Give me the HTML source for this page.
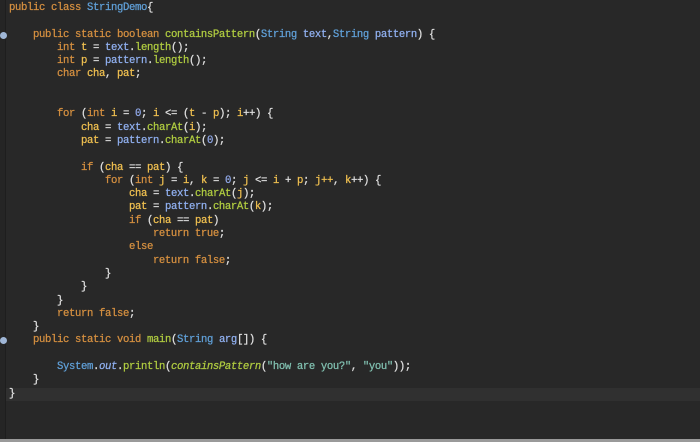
<!DOCTYPE html>
<html><head><style>
body{margin:0;width:700px;height:442px;background:#282828;overflow:hidden;position:relative}
.gut{position:absolute;left:0;top:0;width:5px;height:440px;background:#252525;border-right:1px solid #1e1e1e}
.hl{position:absolute;left:6px;top:388px;width:694px;height:13px;background:#303030}
.bot{position:absolute;left:0;top:439px;width:700px;height:3px;background:#9a9a9a}
.m{position:absolute;left:0;width:7px;height:7px;border-radius:50%;background:#9fb6d6}
pre{position:absolute;left:9px;top:2px;margin:0;font-family:"Liberation Mono",monospace;font-size:10.6px;letter-spacing:-0.36px;line-height:13.3px;color:#e0e0e0;-webkit-text-stroke:0.25px currentColor}
.k{color:#d69040}.v{color:#f0c050}.f{color:#b0cc40}.t{color:#60a0d8}.p{color:#90b0f0}.n{color:#90a8e8}.s{color:#80c0b0}.i{color:#b0cc40;font-style:italic}
</style></head><body>
<div class="gut"></div><div class="hl"></div><div class="bot"></div>
<div class="m" style="top:32px"></div><div class="m" style="top:337px"></div>
<pre><span class="k">public class</span> <span class="t">StringDemo</span>{

    <span class="k">public static boolean</span> <span class="f">containsPattern</span>(<span class="t">String</span> <span class="p">text</span>,<span class="t">String</span> <span class="p">pattern</span>) {
        <span class="k">int</span> <span class="v">t</span> = <span class="p">text</span>.<span class="f">length</span>();
        <span class="k">int</span> <span class="v">p</span> = <span class="p">pattern</span>.<span class="f">length</span>();
        <span class="k">char</span> <span class="v">cha</span>, <span class="v">pat</span>;


        <span class="k">for</span> (<span class="k">int</span> <span class="v">i</span> = <span class="n">0</span>; <span class="v">i</span> &lt;= (<span class="v">t</span> - <span class="v">p</span>); <span class="v">i</span>++) {
            <span class="v">cha</span> = <span class="p">text</span>.<span class="f">charAt</span>(<span class="v">i</span>);
            <span class="v">pat</span> = <span class="p">pattern</span>.<span class="f">charAt</span>(<span class="n">0</span>);

            <span class="k">if</span> (<span class="v">cha</span> == <span class="v">pat</span>) {
                <span class="k">for</span> (<span class="k">int</span> <span class="v">j</span> = <span class="v">i</span>, <span class="v">k</span> = <span class="n">0</span>; <span class="v">j</span> &lt;= <span class="v">i</span> + <span class="v">p</span>; <span class="v">j++</span>, <span class="v">k</span>++) {
                    <span class="v">cha</span> = <span class="p">text</span>.<span class="f">charAt</span>(<span class="v">j</span>);
                    <span class="v">pat</span> = <span class="p">pattern</span>.<span class="f">charAt</span>(<span class="v">k</span>);
                    <span class="k">if</span> (<span class="v">cha</span> == <span class="v">pat</span>)
                        <span class="k">return true</span>;
                    <span class="k">else</span>
                        <span class="k">return false</span>;
                }
            }
        }
        <span class="k">return false</span>;
    }
    <span class="k">public static void</span> <span class="f">main</span>(<span class="t">String</span> <span class="p">arg</span>[]) {

        <span class="t">System</span>.<span class="p" style="font-style:italic">out</span>.<span class="f">println</span>(<span class="i">containsPattern</span>(<span class="s">"how are you?"</span>, <span class="s">"you"</span>));
    }
}</pre>
</body></html>
